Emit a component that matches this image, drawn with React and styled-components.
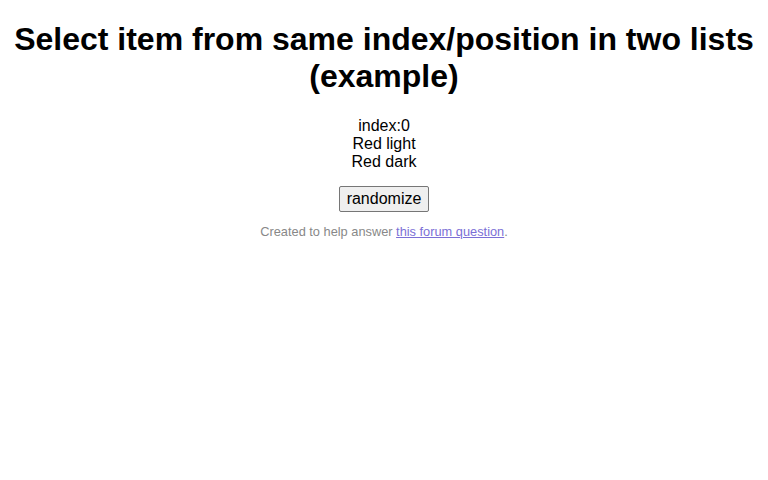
import { useState } from "react";
import styled, { createGlobalStyle } from "styled-components";

const GlobalStyle = createGlobalStyle`
	body {
		margin: 0;
		font-family: "Liberation Sans", Arial, sans-serif;
		color: #000;
		background: #fff;
	}
`;

const light = ["Red light", "Green light", "Blue light", "Yellow light"];
const dark = ["Red dark", "Green dark", "Blue dark", "Yellow dark"];

const Container = styled.div`
	padding: 21px 8px 8px;
	text-align: center;
`;
const Title = styled.h1`
	font-size: 32px;
	font-weight: 700;
	margin: 0 0 22px;
	line-height: 37px;
`;
const Result = styled.div`
	font-size: 16px;
	line-height: 18px;
`;
const Line = styled.div``;
const ButtonRow = styled.div`
	margin-top: 15px;
`;
const Button = styled.button`
	font-family: "Liberation Sans", Arial, sans-serif;
	font-size: 16px;
	line-height: 18px;
	padding: 3px 7px;
	color: #000;
	background: #efefef;
	border: 1px solid #767676;
	border-radius: 2px;
	cursor: pointer;
`;
const Note = styled.p`
	font-size: 12.8px;
	color: #888;
	margin: 12px 0;
`;
const Link = styled.a`
	color: #7b6fd6;
`;

const App = () => {
	const [index, setIndex] = useState(0);
	const randomize = () => setIndex(Math.floor(Math.random() * light.length));
	return (
		<Container>
			<GlobalStyle />
			<Title>Select item from same index/position in two lists (example)</Title>
			<Result>
				<Line>index:{index}</Line>
				<Line>{light[index]}</Line>
				<Line>{dark[index]}</Line>
			</Result>
			<ButtonRow>
				<Button onClick={randomize}>randomize</Button>
			</ButtonRow>
			<Note>
				Created to help answer <Link href="#">this forum question</Link>.
			</Note>
		</Container>
	);
};

export default App;
